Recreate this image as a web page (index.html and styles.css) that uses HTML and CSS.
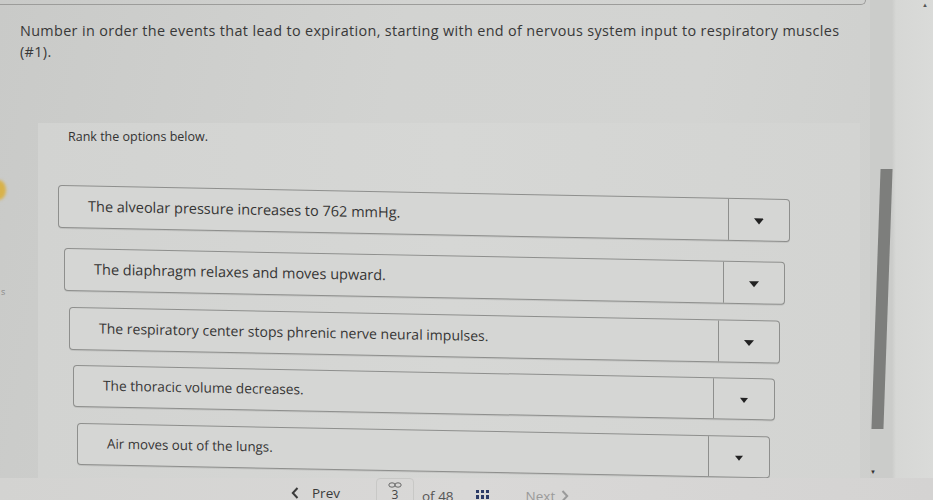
FILE: index.html
```html
<!DOCTYPE html>
<html lang="en">
<head>
<meta charset="utf-8">
<title>Rank the options</title>
<link rel="stylesheet" href="styles.css">
</head>
<body>
<div class="screen">
  <span class="edge-dot"></span>
  <span class="edge-label">s</span>
  <div class="viewport">
    <div class="content">
      <div class="prev-box"></div>
      <p class="question">Number in order the events that lead to expiration, starting with end of nervous system input to respiratory muscles (#1).</p>
      <div class="panel">
        <p class="rank">Rank the options below.</p>
        <ul class="options">
          <li class="option"><span class="opt-text">The alveolar pressure increases to 762 mmHg.</span><span class="opt-select"><span class="caret"></span></span></li>
          <li class="option"><span class="opt-text">The diaphragm relaxes and moves upward.</span><span class="opt-select"><span class="caret"></span></span></li>
          <li class="option"><span class="opt-text">The respiratory center stops phrenic nerve neural impulses.</span><span class="opt-select"><span class="caret"></span></span></li>
          <li class="option"><span class="opt-text">The thoracic volume decreases.</span><span class="opt-select"><span class="caret"></span></span></li>
          <li class="option"><span class="opt-text">Air moves out of the lungs.</span><span class="opt-select"><span class="caret"></span></span></li>
        </ul>
      </div>
    </div>
    <div class="scroll">
      <span class="sb-up">&#9650;</span>
      <div class="sb-track"><div class="sb-thumb"></div></div>
      <span class="sb-down">&#9660;</span>
    </div>
  </div>
  <div class="nav">
    <span class="nav-prev"><svg class="chev" viewBox="0 0 8 12" width="8" height="12"><path d="M6.5 1 L1.8 6 L6.5 11" fill="none" stroke="#3a3a3a" stroke-width="2"/></svg>Prev</span>
    <span class="page-box">
      <svg class="link-ic" viewBox="0 0 14 6" width="14" height="6"><ellipse cx="4" cy="3" rx="3.2" ry="2.2" fill="none" stroke="#666" stroke-width="1"/><ellipse cx="10" cy="3" rx="3.2" ry="2.2" fill="none" stroke="#666" stroke-width="1"/></svg>
      <span class="page-num">3</span>
    </span>
    <span class="of">of 48</span>
    <svg class="grid-ic" viewBox="0 0 13 9" width="13" height="9"><rect x="0" y="0" width="3" height="3"/><rect x="5" y="0" width="3" height="3"/><rect x="10" y="0" width="3" height="3"/><rect x="0" y="5" width="3" height="4"/><rect x="5" y="5" width="3" height="4"/><rect x="10" y="5" width="3" height="4"/></svg>
    <span class="nav-next">Next<svg class="chev" viewBox="0 0 8 12" width="8" height="12"><path d="M1.5 1 L6.2 6 L1.5 11" fill="none" stroke="#9a9a9a" stroke-width="2"/></svg></span>
  </div>
</div>
</body>
</html>
```
FILE: styles.css
```css
* { box-sizing: border-box; }
html, body { margin: 0; padding: 0; }
body {
  width: 933px;
  height: 500px;
  overflow: hidden;
  background: #cfd0ce;
  font-family: "Open Sans", "Liberation Sans", sans-serif;
  color: #3a3a3a;
}
.screen {
  position: relative;
  width: 933px;
  height: 500px;
  display: flex;
  flex-direction: column;
  background: linear-gradient(100deg, #c9cac8 0%, #d2d3d1 40%, #d3d4d2 70%, #cdcecc 100%);
}
.edge-dot {
  position: absolute;
  left: -8px;
  top: 180px;
  width: 14px;
  height: 20px;
  border-radius: 50%;
  background: #d8b24a;
  filter: blur(1.5px);
}
.edge-label {
  position: absolute;
  left: 1px;
  top: 285px;
  font-size: 9px;
  color: #8a8a8a;
}
.viewport {
  height: 478px;
  display: flex;
}
.content {
  width: 870px;
  overflow: hidden;
}
.prev-box {
  width: 866px;
  height: 5px;
  border-bottom: 1px solid #9c9c9a;
  border-right: 1px solid #9c9c9a;
  border-bottom-right-radius: 8px;
}
.question {
  margin: 15px 0 0 0;
  padding: 0 20px;
  font-size: 14.4px;
  letter-spacing: 0.35px;
  line-height: 21px;
  max-width: 866px;
  color: #383838;
}
.panel {
  margin: 61px 0 0 38px;
  width: 822px;
  height: 400px;
  padding: 7px 0 0 0;
  background: linear-gradient(90deg, #d2d3d1, #d6d7d5 50%, #d3d4d2);
}
.rank {
  margin: 0 0 0 30px;
  font-size: 12.5px;
  line-height: 14px;
  color: #333;
}
.options {
  list-style: none;
  margin: 41px 0 0 0;
  padding: 0;
  display: flex;
  flex-direction: column;
}
.option {
  display: flex;
  height: 43px;
  border: 1px solid #8e8f8d;
  border-radius: 4px;
  background: #d5d6d4;
  transform: skewY(1.1deg);
  transform-origin: left top;
  box-shadow: 0 1px 0 rgba(0,0,0,0.08);
}
.option:nth-child(1) { margin: 0 70px 0 20px; }
.option:nth-child(2) { margin: 20px 75px 0 26px; }
.option:nth-child(3) { margin: 16px 80px 0 31px; }
.option:nth-child(4) { margin: 15px 85px 0 35px; height: 42px; }
.option:nth-child(5) { margin: 16px 90px 0 39px; height: 42px; }
.opt-text {
  flex: 1;
  display: flex;
  align-items: center;
  padding: 0 0 3px 29px;
  font-size: 14.5px;
  color: #353535;
}
.option:nth-child(3) .opt-text { font-size: 14px; }
.option:nth-child(4) .opt-text { font-size: 13.7px; }
.option:nth-child(5) .opt-text { font-size: 13.3px; }
.opt-select {
  width: 61px;
  border-left: 1px solid #8e8f8d;
  display: flex;
  align-items: center;
  justify-content: center;
}
.caret {
  width: 0;
  height: 0;
  border-left: 5px solid transparent;
  border-right: 5px solid transparent;
  border-top: 6px solid #222;
  margin-top: 2px;
}
.option:nth-child(n+4) .caret {
  border-left-width: 4px;
  border-right-width: 4px;
  border-top-width: 5px;
}
.scroll {
  flex: 1;
  display: flex;
  flex-direction: column;
  align-items: flex-start;
  position: relative;
  background: linear-gradient(90deg, #cbccca 0, #cbccca 22px, #d6d7d5 26px, #dadbd9 100%);
}
.sb-up {
  align-self: flex-end;
  margin: 1px 5px 0 0;
  font-size: 6px;
  color: #555;
}
.sb-track {
  flex: 1;
  width: 20px;
  padding: 160px 0 0 6px;
}
.sb-thumb {
  width: 12px;
  height: 260px;
  background: #7d7e7c;
  transform: skewX(-2deg);
}
.sb-down {
  margin: 0 0 2px 0;
  font-size: 6px;
  color: #333;
}
.nav {
  flex: 1;
  display: flex;
  align-items: flex-start;
  padding: 7px 0 0 291px;
  background: linear-gradient(90deg, #d3d3d1, #d9d8d7 50%, #d4d3d2);
  font-size: 13.5px;
  line-height: 16px;
  color: #3a3a3a;
}
.nav-prev {
  display: flex;
  align-items: center;
  gap: 13px;
}
.page-box {
  margin-left: 36px;
  margin-top: -7px;
  width: 38px;
  height: 26px;
  border: 1px solid #c8c8c6;
  border-radius: 4px;
  display: flex;
  flex-direction: column;
  align-items: center;
  padding-top: 3px;
  line-height: 12px;
}
.link-ic { display: block; }
.page-num { font-size: 12px; color: #444; margin-top: 1px; }
.of {
  margin-left: 8px;
  margin-top: 3px;
  color: #555;
}
.grid-ic {
  margin: 5px 0 0 22px;
  fill: #2b3a66;
}
.nav-next {
  margin-left: 37px;
  margin-top: 3px;
  display: flex;
  align-items: center;
  gap: 6px;
  color: #9a9a9a;
}
```
